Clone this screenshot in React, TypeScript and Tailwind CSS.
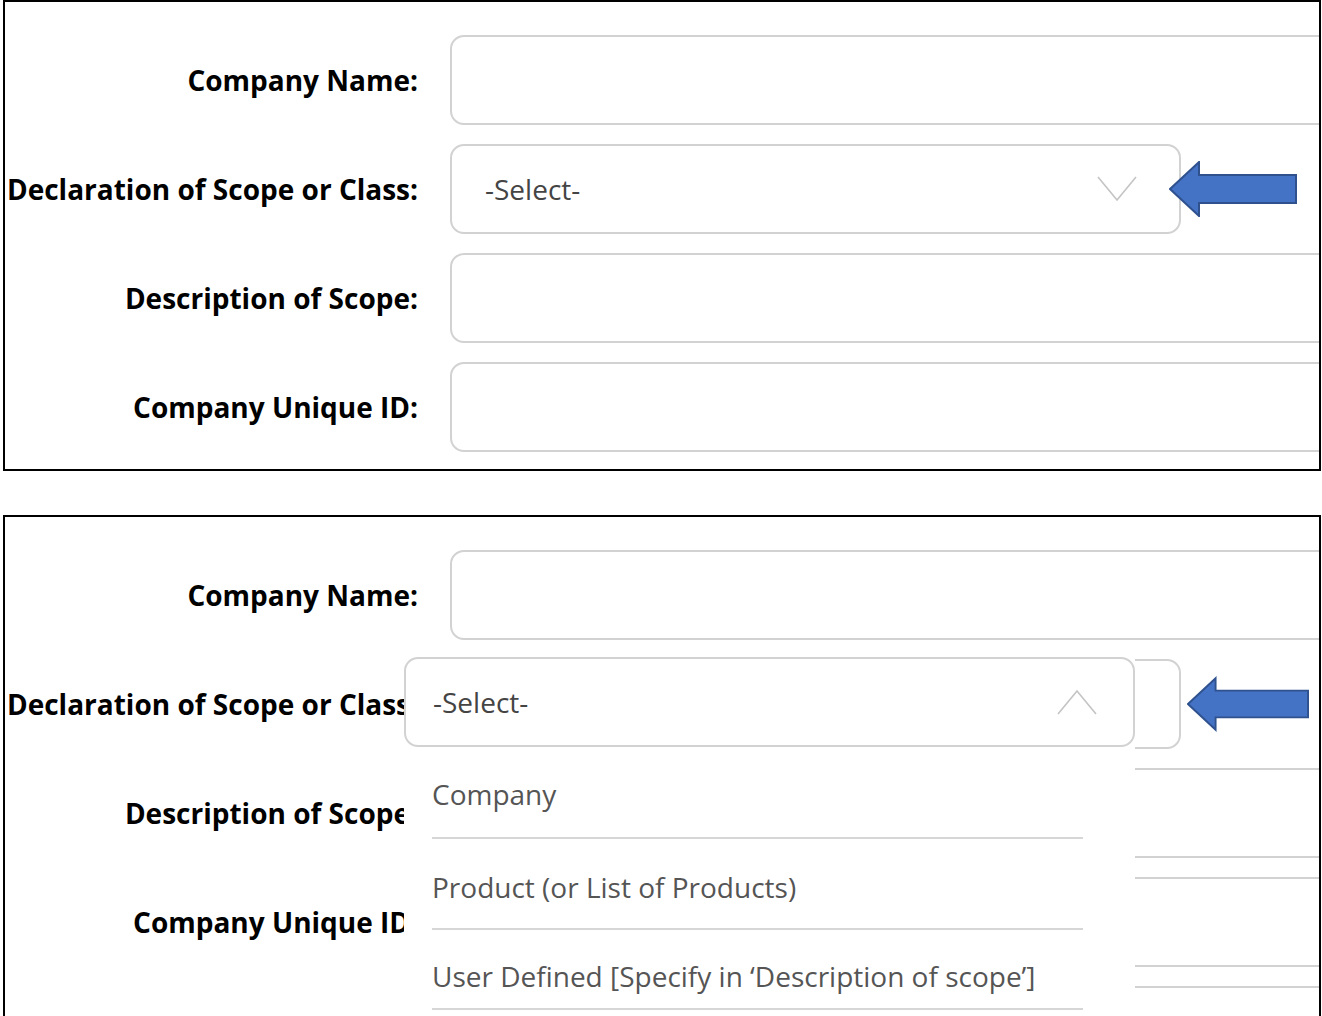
const font = { fontFamily: '"Open Sans", "Noto Sans", sans-serif' };

function Arrow({ className }: { className: string }) {
  return (
    <svg viewBox="0 0 128 56" className={className}>
      <path d="M1 28 L30 1 L30 14 L127 14 L127 42 L30 42 L30 55 Z" fill="#4472C4" stroke="#2F528F" strokeWidth="2" />
    </svg>
  );
}

function Chevron({ up }: { up?: boolean }) {
  return (
    <svg viewBox="0 0 40 26" className="w-[40px] h-[26px]">
      <path d={up ? "M1 25 L20 2 L39 25" : "M1 1 L20 24 L39 1"} fill="none" stroke="#c4c4c4" strokeWidth="1.6" />
    </svg>
  );
}

function Label({ text }: { text: string }) {
  return (
    <div className="w-[413px] shrink-0 text-right text-[28px] leading-[34px] font-bold text-black whitespace-nowrap">{text}</div>
  );
}

function Input() {
  return <div className="ml-[32px] h-[90px] flex-1 -mr-[30px] rounded-[14px] border-2 border-[#d2d2d2] bg-white" />;
}

function Row({ label, children }: { label: string; children?: React.ReactNode }) {
  return (
    <div className="flex items-center">
      <Label text={label} />
      {children ?? <Input />}
    </div>
  );
}

function SelectRow({ label, arrowClass, up }: { label: string; arrowClass: string; up?: boolean }) {
  return (
    <Row label={label}>
      <div className="ml-[32px] h-[90px] w-[731px] shrink-0 rounded-[14px] border-2 border-[#d2d2d2] bg-white flex items-center justify-between pl-[33px] pr-[42px]">
        <span className="text-[28px] text-[#444]">-Select-</span>
        {!up && <Chevron />}
      </div>
      <Arrow className={arrowClass} />
    </Row>
  );
}

export default function App() {
  return (
    <div className="w-[1322px] h-[1016px] overflow-hidden bg-white" style={font}>
      <div className="ml-[3px] w-[1318px] border-2 border-black overflow-hidden pt-[33px] pb-[17px] flex flex-col gap-[19px]">
        <Row label="Company Name:" />
        <SelectRow label="Declaration of Scope or Class:" arrowClass="ml-[-12px] w-[128px] h-[56px]" />
        <Row label="Description of Scope:" />
        <Row label="Company Unique ID:" />
      </div>

      <div className="relative ml-[3px] mt-[44px] w-[1318px] h-[520px] border-2 border-black border-b-0 overflow-hidden pt-[33px] flex flex-col gap-[19px]">
        <Row label="Company Name:" />
        <SelectRow label="Declaration of Scope or Class:" arrowClass="ml-[6px] w-[122px] h-[58px]" up />
        <Row label="Description of Scope:" />
        <Row label="Company Unique ID:" />
        <Row label="Scope Unique ID Authority:" />

        <div className="absolute left-[399px] top-[140px] w-[731px] bottom-0 bg-white">
          <div className="h-[90px] rounded-[14px] border-2 border-[#d2d2d2] bg-white flex items-center justify-between pl-[27px] pr-[36px]">
            <span className="text-[28px] text-[#444]">-Select-</span>
            <Chevron up />
          </div>
          <div className="pl-[28px] pr-[52px] text-[28px] leading-[34px] text-[#555]">
            <div className="h-[92px] pt-[30px] border-b-2 border-[#d6d6d6]">Company</div>
            <div className="h-[91px] pt-[31px] border-b-2 border-[#d6d6d6]">Product (or List of Products)</div>
            <div className="h-[80px] pt-[29px] border-b-2 border-[#d6d6d6] whitespace-nowrap">User Defined [Specify in ‘Description of scope’]</div>
          </div>
        </div>
      </div>
    </div>
  );
}
